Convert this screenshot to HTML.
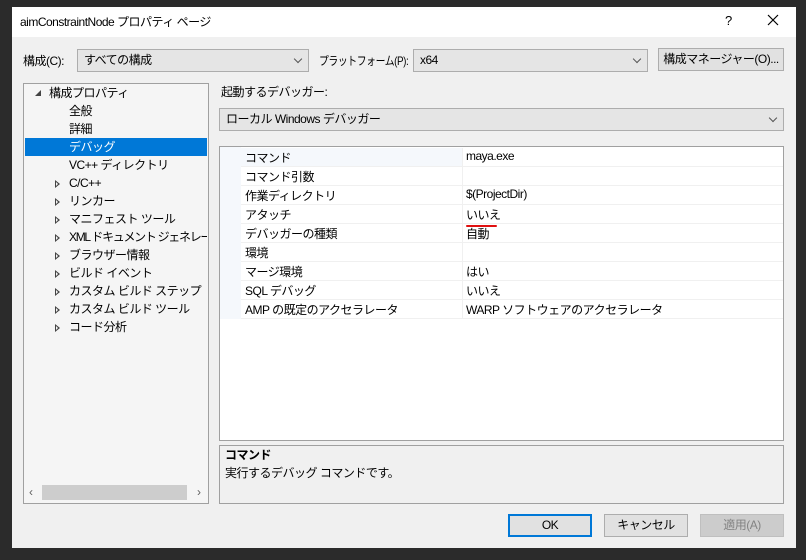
<!DOCTYPE html>
<html><head><meta charset="utf-8"><style>
*{margin:0;padding:0;box-sizing:border-box}
body{width:806px;height:560px;background:#2b2b2b;position:relative;overflow:hidden;font-family:"Liberation Sans","Noto Sans CJK JP",sans-serif;font-size:12px;color:#000;letter-spacing:-0.5px}
.a{position:absolute}
#dlg{left:12px;top:7px;width:784px;height:541px;background:#f0f0f0}
#title{left:12px;top:7px;width:784px;height:30px;background:#fff}
.combo{position:absolute;background:#e5e5e5;border:1px solid #adadad;height:23px;padding:3px 6px;line-height:15px}
.chev{position:absolute;right:7px;top:6px;width:6px;height:6px;border-right:1px solid #555;border-bottom:1px solid #555;transform:rotate(45deg)}
.btn{position:absolute;background:#e1e1e1;border:1px solid #adadad;height:23px;text-align:center;line-height:20px}
.t{position:absolute;white-space:nowrap;line-height:16px}
.tri{position:absolute;width:0;height:0;border-top:4px solid transparent;border-bottom:4px solid transparent;border-left:5px solid #444}
.tri:after{content:"";position:absolute;left:-4px;top:-2px;border-top:2px solid transparent;border-bottom:2px solid transparent;border-left:2px solid #f5f5f5}
.row{position:absolute;left:21px;width:542px;height:19px;border-bottom:1px solid #f0f0f0}
.row span{position:absolute;top:1px;white-space:nowrap}
</style></head><body>
<div class="a" id="dlg"></div>
<div class="a" id="title"></div>
<div class="t" style="left:20px;top:14px">aimConstraintNode プロパティ ページ</div>
<div class="t" style="left:725px;top:13px;font-size:13px">?</div>
<svg class="a" style="left:767px;top:14px" width="12" height="12"><path d="M1 1L11 11M11 1L1 11" stroke="#000" stroke-width="1.2"/></svg>

<div class="t" style="left:23px;top:53px">構成(C):</div>
<div class="combo" style="left:77px;top:49px;width:232px">すべての構成<div class="chev"></div></div>
<div class="t" style="left:319px;top:53px;letter-spacing:-0.5px;transform:scaleX(0.82);transform-origin:0 0">プラットフォーム(P):</div>
<div class="combo" style="left:413px;top:49px;width:235px">x64<div class="chev"></div></div>
<div class="btn" style="left:658px;top:48px;width:126px">構成マネージャー(O)...</div>

<div class="a" style="left:23px;top:83px;width:186px;height:421px;background:#f5f5f5;border:1px solid #a0a0a0"></div>
<div class="a" style="left:35px;top:90px;width:0;height:0;border-left:6px solid transparent;border-bottom:6px solid #444"></div>
<div class="t" style="left:49px;top:85px">構成プロパティ</div>
<div class="t" style="left:69px;top:103px">全般</div>
<div class="t" style="left:69px;top:121px">詳細</div>
<div class="a" style="left:25px;top:138px;width:182px;height:18px;background:#0078d7"></div>
<div class="t" style="left:69px;top:139px;color:#fff">デバッグ</div>
<div class="t" style="left:69px;top:157px">VC++ ディレクトリ</div>
<div class="tri" style="left:55px;top:180px"></div><div class="t" style="left:69px;top:175px">C/C++</div>
<div class="tri" style="left:55px;top:198px"></div><div class="t" style="left:69px;top:193px">リンカー</div>
<div class="tri" style="left:55px;top:216px"></div><div class="t" style="left:69px;top:211px">マニフェスト ツール</div>
<div class="tri" style="left:55px;top:234px"></div><div class="t" style="left:69px;top:229px;width:138px;overflow:hidden;letter-spacing:-1.3px">XML ドキュメント ジェネレーター</div>
<div class="tri" style="left:55px;top:252px"></div><div class="t" style="left:69px;top:247px">ブラウザー情報</div>
<div class="tri" style="left:55px;top:270px"></div><div class="t" style="left:69px;top:265px">ビルド イベント</div>
<div class="tri" style="left:55px;top:288px"></div><div class="t" style="left:69px;top:283px">カスタム ビルド ステップ</div>
<div class="tri" style="left:55px;top:306px"></div><div class="t" style="left:69px;top:301px">カスタム ビルド ツール</div>
<div class="tri" style="left:55px;top:324px"></div><div class="t" style="left:69px;top:319px">コード分析</div>
<div class="a" style="left:42px;top:485px;width:145px;height:15px;background:#cdcdcd"></div>
<div class="t" style="left:29px;top:484px;color:#606060">‹</div>
<div class="t" style="left:197px;top:484px;color:#606060">›</div>

<div class="t" style="left:221px;top:84px">起動するデバッガー:</div>
<div class="combo" style="left:219px;top:108px;width:565px">ローカル Windows デバッガー<div class="chev"></div></div>

<div class="a" style="left:219px;top:146px;width:565px;height:295px;background:#fff;border:1px solid #a0a0a0">
 <div class="a" style="left:0;top:0;width:21px;height:172px;background:#f5f8fc"></div>
 <div class="a" style="left:21px;top:1px;width:221px;height:19px;background:#f5f8fc"></div>
 <div class="a" style="left:242px;top:1px;width:1px;height:171px;background:#f0f0f0"></div>
 <div class="row" style="top:1px"><span style="left:4px">コマンド</span><span style="left:225px">maya.exe</span></div>
 <div class="row" style="top:20px"><span style="left:4px">コマンド引数</span></div>
 <div class="row" style="top:39px"><span style="left:4px">作業ディレクトリ</span><span style="left:225px">$(ProjectDir)</span></div>
 <div class="row" style="top:58px"><span style="left:4px">アタッチ</span><span style="left:225px">いいえ</span></div>
 <div class="row" style="top:77px"><span style="left:4px">デバッガーの種類</span><span style="left:225px">自動</span></div>
 <div class="row" style="top:96px"><span style="left:4px">環境</span></div>
 <div class="row" style="top:115px"><span style="left:4px">マージ環境</span><span style="left:225px">はい</span></div>
 <div class="row" style="top:134px"><span style="left:4px">SQL デバッグ</span><span style="left:225px">いいえ</span></div>
 <div class="row" style="top:153px"><span style="left:4px">AMP の既定のアクセラレータ</span><span style="left:225px">WARP ソフトウェアのアクセラレータ</span></div>
 <div class="a" style="left:246px;top:78px;width:31px;height:2px;background:#e01010;border-radius:1px"></div>
</div>

<div class="a" style="left:219px;top:445px;width:565px;height:59px;background:#f0f0f0;border:1px solid #a0a0a0"></div>
<div class="t" style="left:225px;top:447px;font-weight:bold">コマンド</div>
<div class="t" style="left:225px;top:465px">実行するデバッグ コマンドです。</div>

<div class="btn" style="left:508px;top:514px;width:84px;border:2px solid #0078d7;line-height:19px">OK</div>
<div class="btn" style="left:604px;top:514px;width:84px">キャンセル</div>
<div class="btn" style="left:700px;top:514px;width:84px;background:#ccc;border-color:#bfbfbf;color:#838383">適用(A)</div>
</body></html>
